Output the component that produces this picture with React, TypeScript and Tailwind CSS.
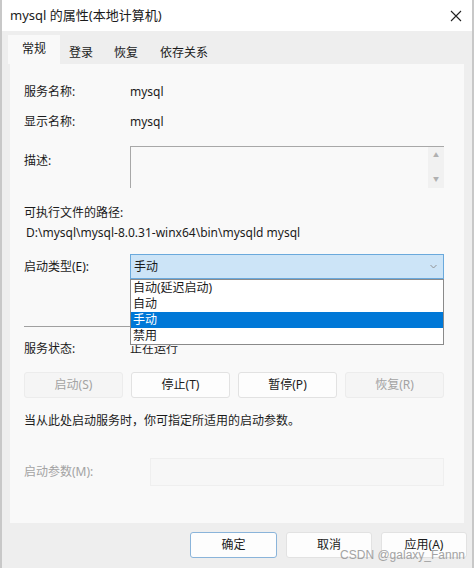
import React from 'react';

const font = { fontFamily: '"Noto Sans", "Noto Sans CJK SC", sans-serif' };

function Btn({ label, disabled, primary, className = '' }: { label: string; disabled?: boolean; primary?: boolean; className?: string }) {
    return (
        <div
            className={`h-[26px] flex items-center justify-center rounded-[3px] border text-[12px] ${
                disabled
                    ? 'bg-[#f5f5f5] border-[#ececec] text-[#a3a3a3]'
                    : primary
                    ? 'bg-[#fdfdfd] border-[#8ab4da] text-[#1b1b1b]'
                    : 'bg-[#fdfdfd] border-[#e2e2e2] text-[#1b1b1b]'
            } ${className}`}
        >
            {label}
        </div>
    );
}

export default function App() {
    return (
        <div style={font} className="w-[474px] h-[568px] bg-[#eeeeee] border-x-2 border-[#c8c8c8] flex flex-col text-[#1b1b1b] overflow-hidden">
            {/* title bar */}
            <div className="h-[31px] bg-white flex items-center justify-between pl-[8px] pr-[8px] shrink-0">
                <span className="text-[13px]">mysql 的属性(本地计算机)</span>
                <svg width="12" height="12" viewBox="0 0 12 12" className="mr-[2px]">
                    <path d="M1 1L11 11M11 1L1 11" stroke="#222" strokeWidth="1.1" />
                </svg>
            </div>

            {/* tabs */}
            <div className="flex items-end h-[33px] pl-[6px] text-[12px] shrink-0">
                <div className="h-[29px] w-[52px] bg-[#f9f9f9] flex items-center justify-center pb-[2px]">常规</div>
                <div className="h-[26px] w-[42px] flex items-center justify-center pt-[4px]">登录</div>
                <div className="h-[26px] w-[48px] flex items-center justify-center pt-[4px]">恢复</div>
                <div className="h-[26px] w-[68px] flex items-center justify-center pt-[4px]">依存关系</div>
            </div>

            {/* panel */}
            <div className="mx-[8px] h-[459px] bg-[#f9f9f9] shrink-0 pl-[14px] pr-[20px] text-[12px] flex flex-col">
                <div className="flex mt-[20px] h-[16px] items-center">
                    <span className="w-[106px]">服务名称:</span>
                    <span>mysql</span>
                </div>
                <div className="flex mt-[14px] h-[16px] items-center">
                    <span className="w-[106px]">显示名称:</span>
                    <span>mysql</span>
                </div>
                <div className="flex mt-[16px]">
                    <span className="w-[106px] mt-[6px]">描述:</span>
                    <div className="flex-1 h-[42px] border-t border-l border-[#a8a8a8] flex justify-end">
                        <div className="w-[16px] bg-[#f1f1f1] flex flex-col justify-between items-center py-[4px] text-[6px] text-[#b0b0b0]">
                            <span>▲</span>
                            <span>▼</span>
                        </div>
                    </div>
                </div>
                <div className="mt-[17px] h-[16px] flex items-center">可执行文件的路径:</div>
                <div className="mt-[4px] h-[16px] flex items-center pl-[2px]">D:\mysql\mysql-8.0.31-winx64\bin\mysqld mysql</div>

                <div className="flex mt-[13px] items-center">
                    <span className="w-[106px]">启动类型(E):</span>
                    <div className="flex-1 relative">
                        <div className="h-[25px] bg-[#cce4f7] border border-[#6aa9dc] flex items-center justify-between pl-[3px] pr-[6px]">
                            <span>手动</span>
                            <svg width="7" height="5" viewBox="0 0 7 5">
                                <path d="M0.5 1L3.5 4L6.5 1" stroke="#8a8a8a" fill="none" strokeWidth="0.9" />
                            </svg>
                        </div>
                        <div className="absolute left-0 right-0 top-[25px] bg-white border border-[#8a8a8a] z-10 flex flex-col text-[12px] leading-[16px]">
                            <div className="px-[2px]">自动(延迟启动)</div>
                            <div className="px-[2px]">自动</div>
                            <div className="px-[2px] bg-[#0078d7] text-white">手动</div>
                            <div className="px-[2px]">禁用</div>
                        </div>
                    </div>
                </div>

                <div className="mt-[47px] h-px bg-[#a0a0a0] w-[110px]" />

                <div className="flex mt-[14px] h-[16px] items-center">
                    <span className="w-[106px]">服务状态:</span>
                    <span>正在运行</span>
                </div>

                <div className="grid grid-cols-4 gap-[8px] mt-[15px]">
                    <Btn label="启动(S)" disabled />
                    <Btn label="停止(T)" />
                    <Btn label="暂停(P)" />
                    <Btn label="恢复(R)" disabled />
                </div>

                <div className="mt-[15px] h-[16px] flex items-center">当从此处启动服务时，你可指定所适用的启动参数。</div>

                <div className="flex mt-[29px] items-center">
                    <span className="w-[126px] text-[#a3a3a3]">启动参数(M):</span>
                    <div className="flex-1 h-[28px] bg-[#f7f7f7] border border-[#efefef]" />
                </div>
            </div>

            {/* footer buttons */}
            <div className="relative flex justify-end gap-[9px] mt-[9px] pr-[5px] text-[12px]">
                <Btn label="确定" primary className="w-[87px]" />
                <Btn label="取消" className="w-[86px]" />
                <Btn label="应用(A)" className="w-[86px]" />
                <span className="absolute right-[7px] top-[14px] text-[12px] text-[#9a9a9a] opacity-90" style={{ fontFamily: '"Liberation Sans", sans-serif' }}>
                    CSDN @galaxy_Fannn
                </span>
            </div>
        </div>
    );
}
